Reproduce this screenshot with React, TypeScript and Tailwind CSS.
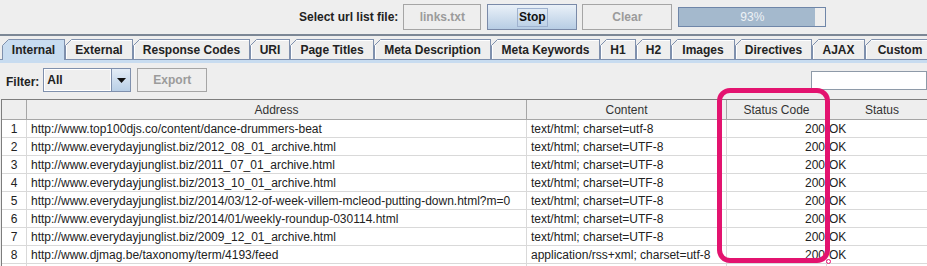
import React from "react";

const tabs: { label: string; w: number }[] = [
  { label: "Internal", w: 63 },
  { label: "External", w: 68 },
  { label: "Response Codes", w: 117 },
  { label: "URI", w: 40 },
  { label: "Page Titles", w: 84 },
  { label: "Meta Description", w: 117 },
  { label: "Meta Keywords", w: 109 },
  { label: "H1", w: 36 },
  { label: "H2", w: 35 },
  { label: "Images", w: 64 },
  { label: "Directives", w: 77 },
  { label: "AJAX", w: 53 },
  { label: "Custom", w: 70 },
];

const rows: { address: string; content: string }[] = [
  { address: "http://www.top100djs.co/content/dance-drummers-beat", content: "text/html; charset=utf-8" },
  { address: "http://www.everydayjunglist.biz/2012_08_01_archive.html", content: "text/html; charset=UTF-8" },
  { address: "http://www.everydayjunglist.biz/2011_07_01_archive.html", content: "text/html; charset=UTF-8" },
  { address: "http://www.everydayjunglist.biz/2013_10_01_archive.html", content: "text/html; charset=UTF-8" },
  {
    address: "http://www.everydayjunglist.biz/2014/03/12-of-week-villem-mcleod-putting-down.html?m=0",
    content: "text/html; charset=UTF-8",
  },
  { address: "http://www.everydayjunglist.biz/2014/01/weekly-roundup-030114.html", content: "text/html; charset=UTF-8" },
  { address: "http://www.everydayjunglist.biz/2009_12_01_archive.html", content: "text/html; charset=UTF-8" },
  { address: "http://www.djmag.be/taxonomy/term/4193/feed", content: "application/rss+xml; charset=utf-8" },
];

const Tab = ({ label, w, active }: { label: string; w: number; active: boolean }) => (
  <div
    className={`relative flex h-[20px] shrink-0 items-center justify-center border-l border-r border-t border-[#7f90ad] font-bold text-[12px] text-[#222] ${
      active
        ? "-mb-px h-[21px] bg-[#c8dcf0]"
        : "bg-[#eeeeee] shadow-[inset_1px_1px_0_#ffffff]"
    }`}
    style={{ width: w }}
  >
    <svg className="absolute -left-px -top-px" width="7" height="7">
      <polygon points="0,0 7,0 0,7" fill="#eeeeee" />
      <line x1="0.5" y1="6.5" x2="6.5" y2="0.5" stroke="#7f90ad" />
    </svg>
    {label}
  </div>
);

export default function App() {
  return (
    <div className="relative h-[266px] w-[927px] overflow-hidden bg-[#eeeeee] font-['Liberation_Sans',Arial,sans-serif] text-[12px] text-[#222]">
      {/* top bar */}
      <div className="flex h-[34px] items-center pl-[299px]">
        <span className="font-bold text-[#222]">Select url list file:</span>
        <button className="ml-[5px] h-[26px] w-[78px] shrink-0 border border-[#a5a5a5] font-bold text-[#9b9b9b]">
          links.txt
        </button>
        <button className="ml-[6px] flex h-[26px] w-[90px] shrink-0 items-center justify-center border border-[#7a8aa8] bg-gradient-to-b from-[#eaf1f8] to-[#b7cde4] font-bold text-[#111]">
          <span className="border border-[#9fb2cf] px-px leading-[17px]">Stop</span>
        </button>
        <button className="ml-[5px] h-[26px] w-[90px] shrink-0 border border-[#a5a5a5] font-bold text-[#9b9b9b]">
          Clear
        </button>
        <div className="relative ml-[6px] flex h-[20px] w-[148px] shrink-0 border border-[#6f86a8] bg-[#eeeeee]">
          <div className="h-full w-[136px] bg-[#a4b9cd]" />
          <span className="absolute inset-0 flex items-center justify-center text-[12px] text-[#eef2f6]">93%</span>
        </div>
      </div>
      <div className="h-[2px] bg-[#7c8795]" />

      {/* tabs */}
      <div className="mt-[3px] flex border-b border-[#7f90ad] pl-[2px]">
        {tabs.map((t, i) => (
          <Tab key={t.label} label={t.label} w={t.w} active={i === 0} />
        ))}
      </div>
      <div className="h-[3px] bg-[#c8dcf0]" />

      {/* filter row */}
      <div className="flex h-[36px] pt-[5px]">
        <span className="ml-[6px] mt-[5px] font-bold text-[#222]">Filter:</span>
        <div className="ml-[4px] flex h-[24px] w-[88px] border border-[#7f90ad]">
          <div className="flex flex-1 items-center border border-[#ffffff] pl-[2px] font-bold text-[#222]">All</div>
          <div className="flex w-[19px] items-center justify-center border-l border-[#7f90ad] bg-gradient-to-b from-[#e4edf7] to-[#b9cfe6]">
            <svg width="9" height="5">
              <polygon points="0,0 9,0 4.5,5" fill="#111" />
            </svg>
          </div>
        </div>
        <button className="ml-[6px] h-[24px] w-[70px] border border-[#a5a5a5] font-bold text-[#9b9b9b]">
          Export
        </button>
        <div className="ml-auto mt-[3px] h-[19px] w-[116px] border border-[#8e9aa8] bg-white" />
      </div>

      {/* table */}
      <div className="ml-px border-l border-t border-[#7d7d7d] bg-white">
        <div className="flex h-[20px] border-b border-[#a6a6a6] bg-[#eeeeee] text-[#333]">
          <div className="w-[25px] shrink-0 border-r border-[#a6a6a6]" />
          <div className="flex w-[500px] shrink-0 items-center justify-center border-r border-[#a6a6a6]">Address</div>
          <div className="flex w-[200px] shrink-0 items-center justify-center border-r border-[#a6a6a6]">Content</div>
          <div className="flex w-[100px] shrink-0 items-center justify-center border-r border-[#a6a6a6]">Status Code</div>
          <div className="flex w-[110px] shrink-0 items-center justify-center">Status</div>
        </div>
        {rows.map((r, i) => (
          <div key={i} className="flex h-[18px] border-b border-[#d9d9d9] text-[#222]">
            <div className="flex w-[25px] shrink-0 items-center justify-center border-r border-[#d9d9d9]">{i + 1}</div>
            <div className="flex w-[500px] shrink-0 items-center overflow-hidden whitespace-nowrap border-r border-[#d9d9d9] pl-[4px]">
              {r.address}
            </div>
            <div className="flex w-[200px] shrink-0 items-center overflow-visible whitespace-nowrap border-r border-[#d9d9d9] pl-[4px]">
              {r.content}
            </div>
            <div className="flex w-[100px] shrink-0 items-center justify-end border-r border-[#d9d9d9] pr-[1px]">200</div>
            <div className="flex w-[110px] shrink-0 items-center pl-[2px]">OK</div>
          </div>
        ))}
        <div className="flex h-[18px]">
          <div className="w-[25px] shrink-0 border-r border-[#d9d9d9]" />
          <div className="w-[500px] shrink-0 border-r border-[#d9d9d9]" />
          <div className="w-[200px] shrink-0 border-r border-[#d9d9d9]" />
          <div className="w-[100px] shrink-0 border-r border-[#d9d9d9]" />
        </div>
      </div>

      {/* highlight overlay */}
      <div className="pointer-events-none absolute left-[717px] top-[88px] h-[175px] w-[113px] rounded-[13px] border-[5px] border-[#e3136f]" />
      <div className="pointer-events-none absolute left-[826px] top-[259px] h-[5px] w-[5px] rounded-full border border-[#e3136f] bg-white" />
    </div>
  );
}
